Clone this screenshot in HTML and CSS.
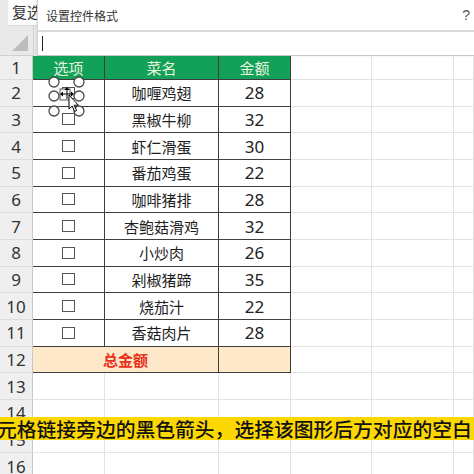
FILE: index.html
```html
<!DOCTYPE html>
<html lang="zh">
<head>
<meta charset="utf-8">
<title>设置控件格式</title>
<link rel="stylesheet" href="styles.css">
</head>
<body>
<div class="app">
  <div class="topbar">
    <div class="leftbox">
      <div class="namebox">复选</div>
      <div class="corner"><span class="tri"></span></div>
    </div>
    <div class="dialog">
      <div class="dlg-title"><span>设置控件格式</span><span class="help">?</span></div>
      <div class="dlg-input"><span class="caret"></span></div>
    </div>
  </div>

  <div class="sheet">
    <div class="rn">1</div><div class="c t hd">选项</div><div class="c t hd">菜名</div><div class="c t hd">金额</div><div class="c"></div><div class="c"></div><div class="c"></div>

    <div class="rn">2</div>
    <div class="c t sel">
      <span class="cb"></span>
      <svg class="handles" width="40" height="44" viewBox="0 0 40 44">
        <g fill="#fff" stroke="#4a4a4a" stroke-width="1.3">
          <circle cx="7" cy="7" r="5"/>
          <circle cx="32" cy="7" r="5"/>
          <circle cx="7" cy="21" r="5"/>
          <circle cx="32" cy="21" r="5"/>
          <circle cx="7" cy="36" r="5"/>
          <circle cx="32" cy="36" r="5"/>
        </g>
        <rect x="13" y="14" width="10" height="11" fill="#fff" stroke="#555" stroke-width="1"/>
        <g fill="#000">
          <rect x="19.5" y="14" width="1" height="10"/>
          <rect x="15" y="18.5" width="10" height="1"/>
          <path d="M20 12 L22.5 15 L17.5 15 Z"/>
          <path d="M13 19 L16 16.5 L16 21.5 Z"/>
          <path d="M27 19 L24 16.5 L24 21.5 Z"/>
        </g>
        <path d="M22 20 L22 34 L25.2 31 L27.6 36.5 L29.6 35.6 L27.2 30.2 L31.4 30.2 Z" fill="#fff" stroke="#000" stroke-width="1" stroke-linejoin="round"/>
      </svg>
    </div>
    <div class="c t">咖喱鸡翅</div><div class="c t num">28</div><div class="c"></div><div class="c"></div><div class="c"></div>

    <div class="rn">3</div><div class="c t"><span class="cb"></span></div><div class="c t">黑椒牛柳</div><div class="c t num">32</div><div class="c"></div><div class="c"></div><div class="c"></div>
    <div class="rn">4</div><div class="c t"><span class="cb"></span></div><div class="c t">虾仁滑蛋</div><div class="c t num">30</div><div class="c"></div><div class="c"></div><div class="c"></div>
    <div class="rn">5</div><div class="c t"><span class="cb"></span></div><div class="c t">番茄鸡蛋</div><div class="c t num">22</div><div class="c"></div><div class="c"></div><div class="c"></div>
    <div class="rn">6</div><div class="c t"><span class="cb"></span></div><div class="c t">咖啡猪排</div><div class="c t num">28</div><div class="c"></div><div class="c"></div><div class="c"></div>
    <div class="rn">7</div><div class="c t"><span class="cb"></span></div><div class="c t">杏鲍菇滑鸡</div><div class="c t num">32</div><div class="c"></div><div class="c"></div><div class="c"></div>
    <div class="rn">8</div><div class="c t"><span class="cb"></span></div><div class="c t">小炒肉</div><div class="c t num">26</div><div class="c"></div><div class="c"></div><div class="c"></div>
    <div class="rn">9</div><div class="c t"><span class="cb"></span></div><div class="c t">剁椒猪蹄</div><div class="c t num">35</div><div class="c"></div><div class="c"></div><div class="c"></div>
    <div class="rn">10</div><div class="c t"><span class="cb"></span></div><div class="c t">烧茄汁</div><div class="c t num">22</div><div class="c"></div><div class="c"></div><div class="c"></div>
    <div class="rn">11</div><div class="c t"><span class="cb"></span></div><div class="c t">香菇肉片</div><div class="c t num">28</div><div class="c"></div><div class="c"></div><div class="c"></div>

    <div class="rn">12</div><div class="c t tot span2">总金额</div><div class="c t tot"></div><div class="c"></div><div class="c"></div><div class="c"></div>

    <div class="rn">13</div><div class="c"></div><div class="c"></div><div class="c"></div><div class="c"></div><div class="c"></div><div class="c"></div>
    <div class="rn">14</div><div class="c"></div><div class="c"></div><div class="c"></div><div class="c"></div><div class="c"></div><div class="c"></div>
    <div class="rn">15</div><div class="c"></div><div class="c"></div><div class="c"></div><div class="c"></div><div class="c"></div><div class="c"></div>
    <div class="rn">16</div><div class="c"></div><div class="c"></div><div class="c"></div><div class="c"></div><div class="c"></div><div class="c"></div>
  </div>

  <div class="caption"><span>元格链接旁边的黑色箭头，选择该图形后方对应的空白</span></div>
</div>
</body>
</html>
```

FILE: styles.css
```css
* { box-sizing: border-box; }

html, body {
  margin: 0;
  padding: 0;
  background: #ffffff;
}

body {
  width: 474px;
  height: 474px;
  overflow: hidden;
  font-family: "Noto Sans CJK SC", "Noto Sans", sans-serif;
  color: #222;
}

.app {
  position: relative;
  width: 474px;
  height: 474px;
  overflow: hidden;
}

/* ---------- top area ---------- */
.topbar {
  display: flex;
  height: 56px;
}

.leftbox {
  width: 37px;
  flex: none;
  display: flex;
  flex-direction: column;
  background: #e9e9e9;
  overflow: hidden;
}

.namebox {
  margin-left: 8px;
  height: 26px;
  width: 40px;
  background: #fbfbfb;
  border-bottom: 1px solid #dcdcdc;
  font-size: 15px;
  line-height: 24px;
  padding-left: 4px;
  white-space: nowrap;
  color: #333;
}

.corner {
  flex: 1;
  display: flex;
  justify-content: flex-end;
  align-items: flex-end;
  padding: 0 5px 4px 0;
  border-right: 1px solid #cfcfcf;
  border-bottom: 1px solid #cfcfcf;
  margin-right: 3px;
}

.tri {
  width: 0;
  height: 0;
  border-left: 16px solid transparent;
  border-bottom: 16px solid #bdbdbd;
}

.dialog {
  flex: 1;
  display: flex;
  flex-direction: column;
  background: #ffffff;
  border-left: 1px solid #d4d4d4;
  border-bottom: 1px solid #c4c4c4;
  box-shadow: -1px 0 2px rgba(0,0,0,0.08);
}

.dlg-title {
  height: 32px;
  display: flex;
  align-items: center;
  justify-content: space-between;
  padding: 0 4px 0 8px;
  border-bottom: 2px solid #dadada;
  font-size: 12px;
  color: #333;
}

.help {
  font-family: "Liberation Sans", sans-serif;
  font-size: 14px;
  color: #555;
}

.dlg-input {
  flex: 1;
  display: flex;
  align-items: center;
  padding-left: 4px;
}

.caret {
  width: 1px;
  height: 15px;
  background: #222;
}

/* ---------- sheet ---------- */
.sheet {
  display: grid;
  grid-template-columns: 33px 72px 114px 72px 81px 82px 1fr;
  grid-template-rows: 24px;
  grid-auto-rows: 26.67px;
}

.rn {
  background: #efefef;
  border-right: 1px solid #c8c8c8;
  border-bottom: 1px solid #dcdcdc;
  display: flex;
  align-items: center;
  justify-content: center;
  font-family: "Noto Sans", sans-serif;
  font-size: 17px;
  color: #333;
}

.c {
  border-right: 1px solid #e3e3e3;
  border-bottom: 1px solid #e3e3e3;
  display: flex;
  align-items: center;
  justify-content: center;
  font-size: 15px;
  color: #1e1e1e;
  white-space: nowrap;
}

.c.t {
  border-right-color: #3e3e3e;
  border-bottom-color: #3e3e3e;
}

.c.hd {
  background: #13a058;
  color: #e6f6df;
  font-size: 15px;
}

.c.num {
  font-family: "Noto Sans", sans-serif;
  font-size: 17px;
  color: #222;
}

.c.tot {
  background: #fde8c9;
  color: #e8311a;
  font-weight: 700;
  font-size: 15px;
}

.span2 {
  grid-column: span 2;
}

.cb {
  display: block;
  width: 13px;
  height: 12px;
  border: 1px solid #555;
  background: #fff;
}

.sel {
  position: relative;
}

.handles {
  position: absolute;
  left: 14px;
  top: -5px;
  z-index: 2;
  overflow: visible;
}

/* ---------- subtitle ---------- */
.caption {
  position: absolute;
  left: 0;
  top: 417px;
  width: 474px;
  height: 23px;
  background: #fdd800;
  overflow: hidden;
  white-space: nowrap;
  z-index: 3;
}

.caption span {
  display: block;
  margin-left: -3px;
  font-size: 19.8px;
  line-height: 23px;
  color: #111;
  font-weight: 500;
}
```
